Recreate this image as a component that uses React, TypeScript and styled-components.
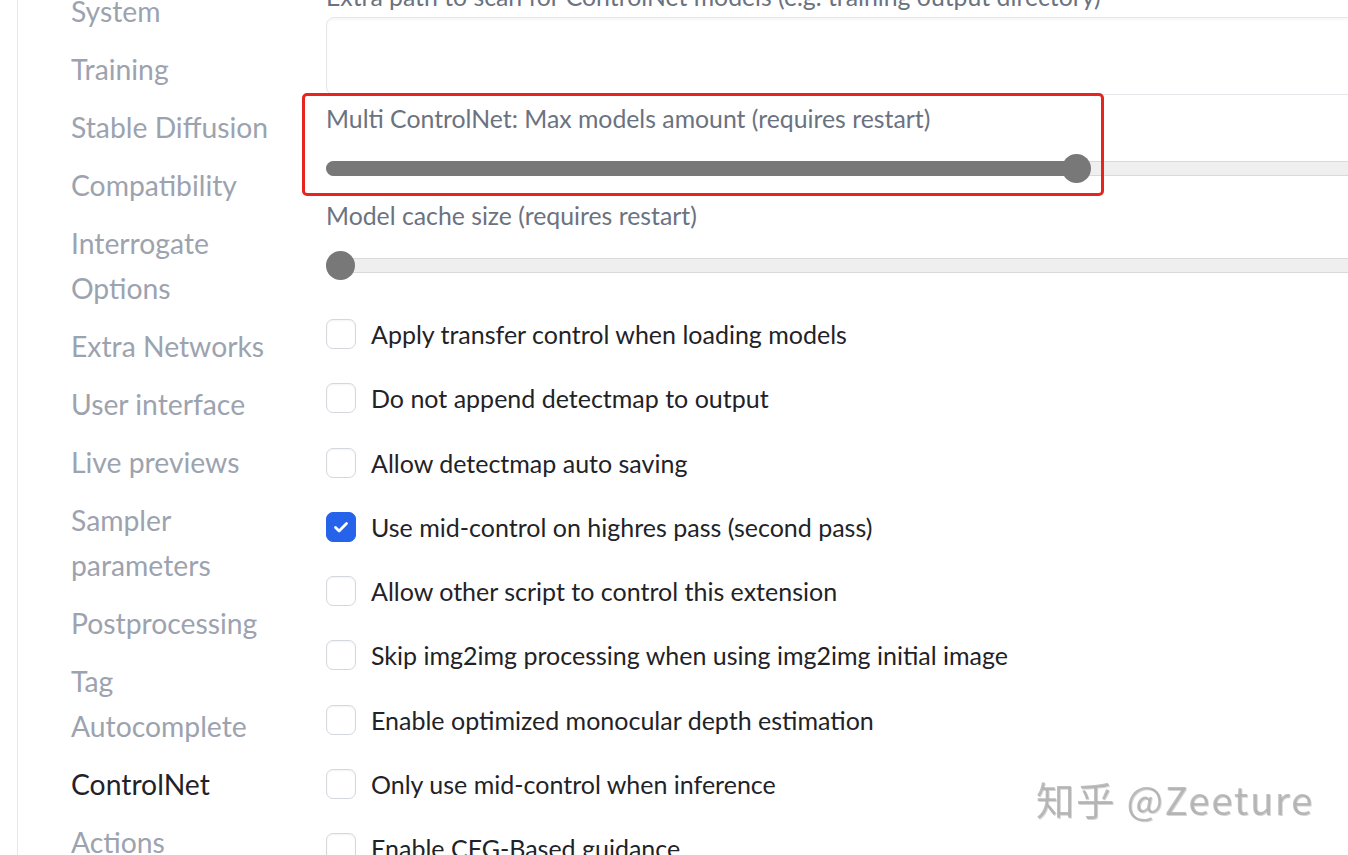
import React from "react"
import styled, { createGlobalStyle } from "styled-components"

const GlobalStyle = createGlobalStyle`
  html, body {
    margin: 0;
    padding: 0;
    background: #ffffff;
    overflow: hidden;
    width: 1348px;
    height: 855px;
  }
  body {
    font-family: Lato, "Noto Sans", "Liberation Sans", sans-serif;
  }
`

const Page = styled.div`
  display: flex;
  align-items: flex-start;
  padding-left: 17px;
  margin-top: -18px;
  width: 1600px;
`

const Sidebar = styled.nav`
  flex: none;
  width: 309px;
  min-height: 900px;
  border-left: 1px solid #e5e7eb;
  box-sizing: border-box;
  padding-left: 53px;
`

const NavItem = styled.div<{ $active?: boolean }>`
  width: 205px;
  padding: 6.5px 0;
  font-size: 28.3px;
  line-height: 45px;
  color: ${p => (p.$active ? "#1f2328" : "#9ca3af")};
`

const Main = styled.main`
  flex: none;
  width: 1255px;
  display: flex;
  flex-direction: column;
`

const FieldLabel = styled.div`
  font-size: 24.8px;
  line-height: 30px;
  color: #6b7280;
`

const TextBox = styled.div`
  margin-top: 5px;
  height: 78px;
  border: 1px solid #e5e7eb;
  border-radius: 8px;
  box-sizing: border-box;
  box-shadow: inset 0 2px 3px rgba(0, 0, 0, 0.04);
  background: #ffffff;
`

const SliderBlock = styled.div`
  position: relative;
  margin-top: 9px;
  & + & {
    margin-top: 18px;
  }
`

const SliderRow = styled.div`
  position: relative;
  margin-top: 19px;
  height: 30px;
  display: flex;
  align-items: center;
`

const Track = styled.div`
  position: relative;
  width: 100%;
  height: 15px;
  box-sizing: border-box;
  border: 1px solid #d9d9d9;
  border-radius: 8px;
  background: #efefef;
`

const Fill = styled.div`
  position: absolute;
  left: -1px;
  top: -1px;
  height: 15px;
  border-radius: 8px;
  background: #787878;
`

const Thumb = styled.div`
  position: absolute;
  top: 50%;
  width: 29px;
  height: 29px;
  margin: -14.5px 0 0 -14.5px;
  border-radius: 50%;
  background: #787878;
`

const Highlight = styled.div`
  position: absolute;
  left: -24px;
  top: -11px;
  width: 802px;
  height: 103px;
  border: 3px solid #e8241f;
  border-radius: 5px;
  box-sizing: border-box;
  pointer-events: none;
`

const CheckList = styled.div`
  margin-top: 39px;
  display: flex;
  flex-direction: column;
  gap: 34.3px;
`

const CheckRow = styled.label`
  display: flex;
  align-items: center;
  gap: 15px;
  height: 30px;
  font-size: 25px;
  color: #1f2328;
`

const Box = styled.span<{ $checked?: boolean }>`
  flex: none;
  width: 30px;
  height: 30px;
  box-sizing: border-box;
  border-radius: 7px;
  border: 1px solid ${p => (p.$checked ? "#2563eb" : "#d4d7dc")};
  background: ${p => (p.$checked ? "#2563eb" : "#ffffff")};
  box-shadow: ${p => (p.$checked ? "none" : "inset 0 1px 2px rgba(0,0,0,0.05)")};
  display: flex;
  align-items: center;
  justify-content: center;
`

const Watermark = styled.div`
  position: fixed;
  left: 1036px;
  top: 774px;
  font-family: "Noto Sans CJK SC", "Noto Sans", sans-serif;
  font-size: 38.5px;
  line-height: 48px;
  letter-spacing: 1.6px;
  color: rgba(170, 170, 170, 0.75);
  text-shadow: 1px 1px 0 rgba(90, 90, 90, 0.25);
  white-space: nowrap;
  pointer-events: none;
`

const navItems = [
  "System",
  "Training",
  "Stable Diffusion",
  "Compatibility",
  "Interrogate Options",
  "Extra Networks",
  "User interface",
  "Live previews",
  "Sampler parameters",
  "Postprocessing",
  "Tag Autocomplete",
  "ControlNet",
  "Actions",
]

const checks = [
  { label: "Apply transfer control when loading models", checked: false },
  { label: "Do not append detectmap to output", checked: false },
  { label: "Allow detectmap auto saving", checked: false },
  { label: "Use mid-control on highres pass (second pass)", checked: true },
  { label: "Allow other script to control this extension", checked: false },
  { label: "Skip img2img processing when using img2img initial image", checked: false },
  { label: "Enable optimized monocular depth estimation", checked: false },
  { label: "Only use mid-control when inference", checked: false },
  { label: "Enable CFG-Based guidance", checked: false },
]

const TRACK_WIDTH = 1255

const Slider = ({
  label,
  value,
  min,
  max,
  highlighted,
}: {
  label: string
  value: number
  min: number
  max: number
  highlighted?: boolean
}) => {
  // thumb travels inside the track, half a thumb from each end
  const pos = 14.5 + ((value - min) / (max - min)) * (TRACK_WIDTH - 29)
  return (
    <SliderBlock>
      <FieldLabel>{label}</FieldLabel>
      <SliderRow>
        <Track>
          {value > min && <Fill style={{ width: pos + 1 }} />}
        </Track>
        <Thumb style={{ left: pos }} />
      </SliderRow>
      {highlighted && <Highlight />}
    </SliderBlock>
  )
}

const CheckIcon = () => (
  <svg width="18" height="18" viewBox="0 0 18 18" fill="none">
    <path
      d="M3.5 9.5l3.6 3.4L14.5 5.5"
      stroke="#ffffff"
      strokeWidth="2.8"
      strokeLinecap="round"
      strokeLinejoin="round"
    />
  </svg>
)

const App = () => {
  return (
    <>
      <GlobalStyle />
      <Page>
        <Sidebar>
          {navItems.map(item => (
            <NavItem key={item} $active={item === "ControlNet"}>
              {item}
            </NavItem>
          ))}
        </Sidebar>
        <Main>
          <FieldLabel>
            Extra path to scan for ControlNet models (e.g. training output directory)
          </FieldLabel>
          <TextBox />
          <Slider
            label="Multi ControlNet: Max models amount (requires restart)"
            value={10}
            min={1}
            max={16}
            highlighted
          />
          <Slider label="Model cache size (requires restart)" value={1} min={1} max={5} />
          <CheckList>
            {checks.map(c => (
              <CheckRow key={c.label}>
                <Box $checked={c.checked}>{c.checked && <CheckIcon />}</Box>
                {c.label}
              </CheckRow>
            ))}
          </CheckList>
        </Main>
      </Page>
      <Watermark>知乎 @Zeeture</Watermark>
    </>
  )
}

export default App
